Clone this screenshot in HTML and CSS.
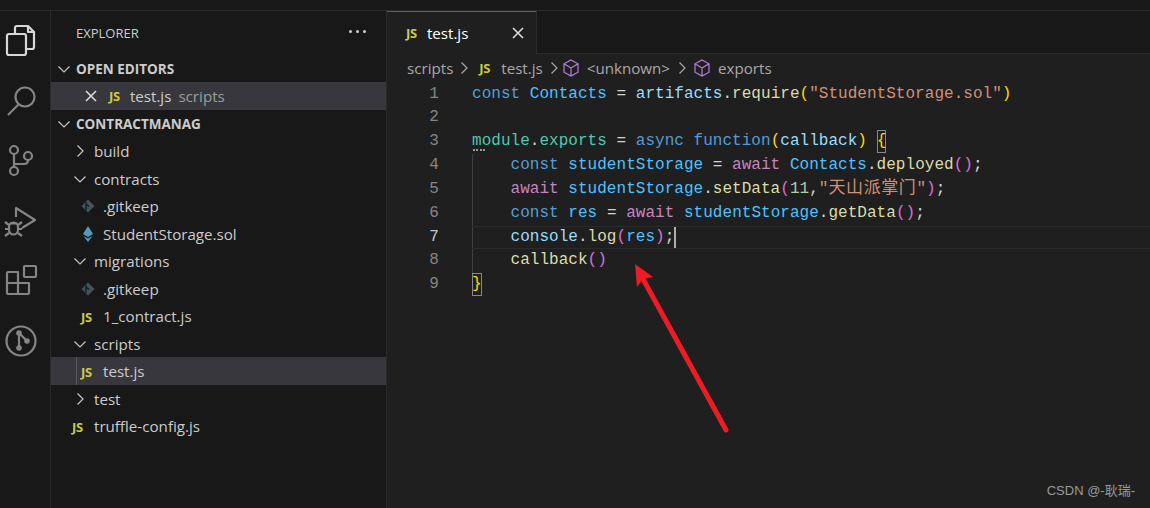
FILE: index.html
```html
<!DOCTYPE html>
<html>
<head>
	<meta charset="utf-8">
	<title>test.js - contractmanag</title>
	<link rel="stylesheet" href="styles.css">
</head>
<body>
	<div class="topbar"></div>
	<div class="workbench">
		<!-- activity bar -->
		<nav class="activity">
			<svg class="act act-on" viewBox="0 0 34 34"><path d="M11 11V5a2 2 0 0 1 2-2h11l6 6v15a2 2 0 0 1-2 2h-6"/><path d="M24 3v6h6"/><rect x="3" y="11" width="19" height="21" rx="2"/></svg>
			<svg class="act" viewBox="0 0 34 34"><circle cx="21" cy="14" r="9.5"/><path d="M14.5 21.500 4 32"/></svg>
			<svg class="act" viewBox="0 0 34 34"><circle cx="10" cy="7" r="4"/><circle cx="24" cy="13" r="4"/><circle cx="10" cy="28" r="4"/><path d="M10 11v13M24 17c0 3-2 4-4 4H10"/></svg>
			<svg class="act" viewBox="0 0 34 34"><path d="M12 13V4l19 12-13 8"/><path d="M5 23a4.500 4.500 0 0 1 9 0v3a4.500 4.500 0 0 1-9 0z"/><path d="M6 19.500h7M1 18l4 3M18 18l-4 3M1 25h4M14 25h4M1 32l4-3M18 32l-4-3"/></svg>
			<svg class="act" viewBox="0 0 34 34"><rect x="20" y="2" width="12" height="11" rx="1"/><path d="M3 9a1 1 0 0 1 1-1h10v22H4a1 1 0 0 1-1-1zM3 19h22v10a1 1 0 0 1-1 1H14"/></svg>
			<svg class="act" viewBox="0 0 34 34"><circle cx="17" cy="17" r="14.500"/><path d="M15 9v15M15 9l8 8"/><circle class="dot" cx="15" cy="9" r="2.800"/><circle class="dot" cx="15" cy="24" r="2.800"/><circle class="dot" cx="23" cy="17" r="2.800"/></svg>
		</nav>

		<!-- explorer -->
		<aside class="sidebar">
			<div class="side-title">
				<span>EXPLORER</span>
				<span class="more"><i></i><i></i><i></i></span>
			</div>
			<div class="row head"><svg class="chev" viewBox="0 0 16 16"><path d="M2.500 5.500 8 11l5.500-5.500"/></svg>OPEN EDITORS</div>
			<div class="row open sel">
				<svg class="close" viewBox="0 0 16 16"><path d="M3 3l10 10M13 3 3 13"/></svg>
				<span class="js">JS</span><span>test.js</span><span class="dim">scripts</span>
			</div>
			<div class="row head"><svg class="chev" viewBox="0 0 16 16"><path d="M2.500 5.500 8 11l5.500-5.500"/></svg>CONTRACTMANAG</div>
			<div class="row l1"><span class="slot"><svg class="chev" viewBox="0 0 16 16"><path d="M5.500 2.500 11 8l-5.500 5.500"/></svg></span>build</div>
			<div class="row l1"><span class="slot"><svg class="chev" viewBox="0 0 16 16"><path d="M2.500 5.500 8 11l5.500-5.500"/></svg></span>contracts</div>
			<div class="row l2"><span class="slot"><svg class="git" viewBox="0 0 14 14"><path d="M7 .5 13.500 7 7 13.500.5 7z"/><path class="cut" d="M5 3v8M5 5l3 2.500"/></svg></span>.gitkeep</div>
			<div class="row l2"><span class="slot"><svg class="eth" viewBox="0 0 14 16"><path d="M7 0l5 8-5 3-5-3z"/><path d="M2.500 10 7 12.500 11.500 10 7 16z"/></svg></span>StudentStorage.sol</div>
			<div class="row l1"><span class="slot"><svg class="chev" viewBox="0 0 16 16"><path d="M2.500 5.500 8 11l5.500-5.500"/></svg></span>migrations</div>
			<div class="row l2"><span class="slot"><svg class="git" viewBox="0 0 14 14"><path d="M7 .5 13.500 7 7 13.500.5 7z"/><path class="cut" d="M5 3v8M5 5l3 2.500"/></svg></span>.gitkeep</div>
			<div class="row l2"><span class="slot"><span class="js">JS</span></span>1_contract.js</div>
			<div class="row l1"><span class="slot"><svg class="chev" viewBox="0 0 16 16"><path d="M2.500 5.500 8 11l5.500-5.500"/></svg></span>scripts</div>
			<div class="row l2 sel guide"><span class="slot"><span class="js">JS</span></span>test.js</div>
			<div class="row l1"><span class="slot"><svg class="chev" viewBox="0 0 16 16"><path d="M5.500 2.500 11 8l-5.500 5.500"/></svg></span>test</div>
			<div class="row l1"><span class="slot"><span class="js">JS</span></span>truffle-config.js</div>
		</aside>

		<!-- editor -->
		<main class="editor">
			<div class="tabs">
				<div class="tab">
					<span class="js">JS</span><span class="tab-name">test.js</span>
					<svg class="close" viewBox="0 0 16 16"><path d="M3 3l10 10M13 3 3 13"/></svg>
				</div>
			</div>
			<div class="crumbs">
				<span>scripts</span>
				<svg class="sep" viewBox="0 0 16 16"><path d="M5.500 2.500 11 8l-5.500 5.500"/></svg>
				<span class="js">JS</span><span>test.js</span>
				<svg class="sep" viewBox="0 0 16 16"><path d="M5.500 2.500 11 8l-5.500 5.500"/></svg>
				<svg class="cube" viewBox="0 0 16 18"><path d="M8 1l7 3.800v8.400L8 17l-7-3.800V4.800zM1 4.800 8 9l7-4.200M8 9v8"/></svg>
				<span>&lt;unknown&gt;</span>
				<svg class="sep sep-wide" viewBox="0 0 16 16"><path d="M5.500 2.500 11 8l-5.500 5.500"/></svg>
				<svg class="cube" viewBox="0 0 16 18"><path d="M8 1l7 3.800v8.400L8 17l-7-3.800V4.800zM1 4.800 8 9l7-4.200M8 9v8"/></svg>
				<span>exports</span>
			</div>
			<div class="code">
				<div class="line"><span class="num">1</span><span class="src"><b class="kw">const</b> <b class="cn">Contacts</b> = <b class="var">artifacts</b>.<b class="fn">require</b><b class="br">(</b><b class="str">"StudentStorage.sol"</b><b class="br">)</b></span></div>
				<div class="line"><span class="num">2</span><span class="src"></span></div>
				<div class="line"><span class="num">3</span><span class="src"><b class="ty hint">module</b>.<b class="ty">exports</b> = <b class="kw">async</b> <b class="kw">function</b><b class="br">(</b><b class="var">callback</b><b class="br">)</b> <b class="br match">{</b></span></div>
				<div class="line in"><span class="num">4</span><span class="src">    <b class="kw">const</b> <b class="cn">studentStorage</b> = <b class="ctl">await</b> <b class="cn">Contacts</b>.<b class="fn">deployed</b><b class="pk">()</b>;</span></div>
				<div class="line in"><span class="num">5</span><span class="src">    <b class="ctl">await</b> <b class="cn">studentStorage</b>.<b class="fn">setData</b><b class="pk">(</b><b class="lit">11</b>,<b class="str">"<em>天山派掌门</em>"</b><b class="pk">)</b>;</span></div>
				<div class="line in"><span class="num">6</span><span class="src">    <b class="kw">const</b> <b class="cn">res</b> = <b class="ctl">await</b> <b class="cn">studentStorage</b>.<b class="fn">getData</b><b class="pk">()</b>;</span></div>
				<div class="line in active"><span class="num">7</span><span class="src">    <b class="var">console</b>.<b class="fn">log</b><b class="pk">(</b><b class="cn">res</b><b class="pk">)</b>;<i class="cursor"></i></span></div>
				<div class="line in"><span class="num">8</span><span class="src">    <b class="fn">callback</b><b class="pk">()</b></span></div>
				<div class="line"><span class="num">9</span><span class="src"><b class="br match">}</b></span></div>
			</div>
		</main>
	</div>

	<!-- annotation drawn over the screenshot -->
	<svg class="arrow" viewBox="0 0 1150 508"><path class="shaft" d="M643 279 726 430"/><path class="tip" d="M635 264l18 13-10 2-6 8z"/></svg>
	<div class="mark">CSDN @-耿瑞-</div>
</body>
</html>
```

FILE: styles.css
```css
* {
	margin: 0;
	padding: 0;
	box-sizing: border-box;
}
body {
	width: 1150px;
	height: 508px;
	overflow: hidden;
	background: #181818;
	color: #cccccc;
	font-family: "Open Sans", "Noto Sans", sans-serif;
	font-size: 15.15px;
}
svg {
	display: block;
	fill: none;
}
b, em {
	font-weight: normal;
	font-style: normal;
}

.topbar {
	height: 11px;
	border-bottom: 1px solid #2b2b2b;
}
.workbench {
	display: flex;
	height: 497px;
}

/* activity bar */
.activity {
	width: 51px;
	flex: none;
	padding: 12px 0 0 4px;
	border-right: 1px solid #2b2b2b;
	display: flex;
	flex-direction: column;
	gap: 26.2px;
}
.act {
	width: 34px;
	height: 34px;
	stroke: #858585;
	stroke-width: 2.2;
	stroke-linejoin: round;
}
.act-on {
	stroke: #d7d7d7;
}
.act .dot {
	fill: #858585;
	stroke: none;
}

/* sidebar */
.sidebar {
	width: 336px;
	flex: none;
	border-right: 1px solid #2b2b2b;
}
.side-title {
	height: 43.8px;
	padding: 0 20px 0 25px;
	display: flex;
	align-items: center;
	justify-content: space-between;
	font-size: 13px;
}
.more {
	display: flex;
	gap: 4px;
	margin-bottom: 2px;
}
.more i {
	width: 3px;
	height: 3px;
	border-radius: 50%;
	background: #d0d0d0;
}
.row {
	height: 27.5px;
	display: flex;
	align-items: center;
	white-space: nowrap;
	position: relative;
}
.head {
	padding-left: 5px;
	font-size: 13.5px;
	font-weight: 700;
}
.head .chev {
	margin-right: 4px;
}
.open {
	padding-left: 32px;
}
.open .close {
	margin-right: 10px;
}
.open .js {
	margin-right: 10px;
}
.dim {
	margin-left: 7px;
	color: #9d9d9d;
}
.sel {
	background: #37373d;
}
.l1 {
	padding-left: 21px;
}
.l2 {
	padding-left: 30px;
}
.slot {
	width: 22px;
	flex: none;
}
.guide::before {
	content: "";
	position: absolute;
	left: 25px;
	top: 0;
	bottom: 0;
	width: 1px;
	background: #5a5a5a;
}
.chev {
	width: 16px;
	height: 16px;
	stroke: #c5c5c5;
	stroke-width: 1.2;
}
.close {
	width: 16px;
	height: 16px;
	stroke: #e0e0e0;
	stroke-width: 1.5;
}
.js {
	color: #cbcb41;
	font-weight: 700;
	font-size: 13px;
	letter-spacing: -.3px;
}
.git {
	width: 14px;
	height: 14px;
	fill: #41535b;
}
.git .cut {
	fill: none;
	stroke: #181818;
	stroke-width: 1.3;
}
.eth {
	width: 14px;
	height: 16px;
	fill: #519aba;
}

/* tabs and breadcrumb */
.editor {
	flex: 1;
	background: #1f1f1f;
	position: relative;
}
.tabs {
	height: 43px;
	background: #181818;
	border-bottom: 1px solid #2b2b2b;
}
.tab {
	width: 150px;
	height: 43px;
	padding: 0 10px 0 19px;
	display: flex;
	align-items: center;
	background: #1f1f1f;
	border-top: 1px solid #0078d4;
	border-right: 1px solid #2b2b2b;
	color: #ffffff;
}
.tab-name {
	margin-left: 10px;
	flex: 1;
}
.crumbs {
	height: 28.5px;
	padding-left: 20px;
	display: flex;
	align-items: center;
	color: #a9a9a9;
}
.crumbs .js {
	margin: 0 11px 0 4px;
}
.sep {
	width: 16px;
	height: 16px;
	margin: 0 3px;
	stroke: #a9a9a9;
	stroke-width: 1.2;
}
.sep-wide {
	margin: 0 6px 0 4px;
}
.cube {
	width: 16px;
	height: 18px;
	margin: 0 8px 0 -2px;
	stroke: #b180d7;
	stroke-width: 1.2;
}

/* code */
.code {
	font-family: "Liberation Mono", monospace;
	font-size: 16px;
	letter-spacing: .03px;
}
.line {
	height: 23.85px;
	line-height: 23.85px;
	display: flex;
	white-space: pre;
}
.num {
	width: 85px;
	flex: none;
	padding-right: 33px;
	text-align: right;
	color: #858585;
}
.src {
	flex: 1;
	color: #d4d4d4;
}
.in .src {
	box-shadow: inset 1px 0 #404040;
}
.active .num {
	color: #c6c6c6;
}
.active .src {
	border-top: 1px solid #2a2a2a;
	border-bottom: 1px solid #2a2a2a;
	line-height: 21.85px;
}
.cursor {
	display: inline-block;
	width: 2px;
	height: 21px;
	vertical-align: top;
	background: #aeafad;
}
.kw { color: #569cd6; }
.cn { color: #4fc1ff; }
.var { color: #9cdcfe; }
.fn { color: #dcdcaa; }
.ty { color: #4ec9b0; }
.ctl { color: #c586c0; }
.str { color: #ce9178; }
.lit { color: #b5cea8; }
.br { color: #ffd700; }
.pk { color: #da70d6; }
.str em {
	font-family: "Noto Sans CJK SC", sans-serif;
	font-size: 17px;
	letter-spacing: .6px;
	line-height: 0;
}
.match {
	display: inline-block;
	height: 23px;
	box-shadow: inset 0 0 0 1px #888888;
}
.hint {
	position: relative;
}
.hint::after {
	content: "";
	position: absolute;
	left: 1px;
	bottom: -1px;
	width: 12px;
	border-bottom: 2px dotted #9a9a9a;
}

/* overlays */
.arrow {
	position: absolute;
	left: 0;
	top: 0;
	width: 1150px;
	height: 508px;
}
.shaft {
	stroke: #ed1c24;
	stroke-width: 5;
	stroke-linecap: round;
}
.tip {
	fill: #ed1c24;
}
.mark {
	position: absolute;
	right: 15px;
	bottom: 9px;
	font-family: "Liberation Sans", "Noto Sans CJK SC", sans-serif;
	font-size: 13px;
	color: #9a9a9a;
}
```
